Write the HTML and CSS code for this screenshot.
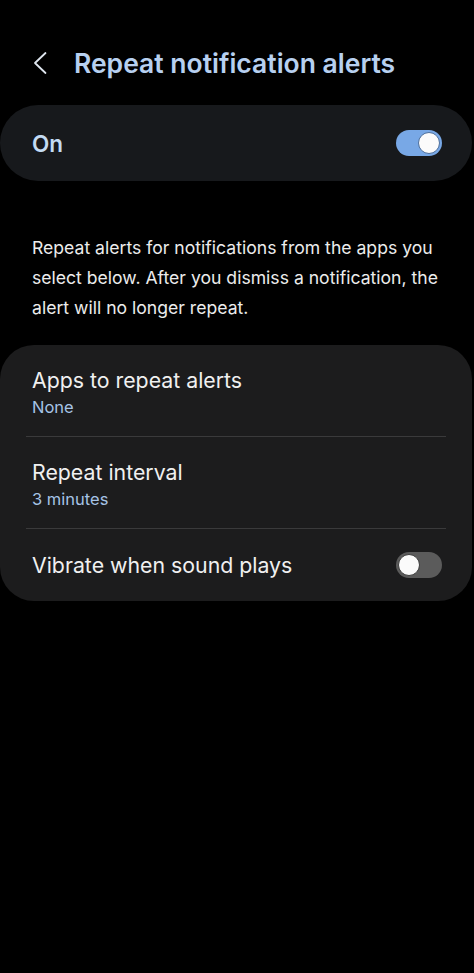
FILE: index.html
```html
<!DOCTYPE html>
<html>
<head>
    <title>Repeat notification alerts</title>
    <link rel="stylesheet" href="styles.css">
</head>
<body>
    <div class="screen">
        <div class="header">
            <svg class="back" width="14" height="26" viewBox="0 0 14 26">
                <path d="M12.5 3 L2 13 L12.5 23" fill="none" stroke="#dfe6ef" stroke-width="1.8" stroke-linecap="round" stroke-linejoin="round"/>
            </svg>
            <h1 class="title">Repeat notification alerts</h1>
        </div>

        <div class="master">
            <span class="master_label">On</span>
            <span class="switch switch_on"><span class="knob"></span></span>
        </div>

        <p class="desc">Repeat alerts for notifications from the apps you select below. After you dismiss a notification, the alert will no longer repeat.</p>

        <div class="card">
            <div class="row">
                <div class="row_title">Apps to repeat alerts</div>
                <div class="row_sub">None</div>
            </div>
            <div class="divider"></div>
            <div class="row">
                <div class="row_title">Repeat interval</div>
                <div class="row_sub">3 minutes</div>
            </div>
            <div class="divider"></div>
            <div class="row row_switch">
                <div class="row_title">Vibrate when sound plays</div>
                <span class="switch switch_off"><span class="knob"></span></span>
            </div>
        </div>
    </div>
</body>
</html>
```

FILE: styles.css
```css
body {
	margin: 0;
	background-color: #000000;
	font-family: Inter, "Noto Sans", sans-serif;
	color: #ececec;
}

.screen {
	width: 474px;
	height: 973px;
	display: flex;
	flex-direction: column;
}

.header {
	display: flex;
	align-items: center;
	height: 52px;
	margin-top: 37px;
	padding-left: 33px;
}

.back {
	margin-right: 27px;
}

.title {
	margin: 0;
	font-size: 26.5px;
	font-weight: 600;
	color: #b7d0f0;
}

.master {
	display: flex;
	align-items: center;
	justify-content: space-between;
	height: 76px;
	margin: 16px 2px 0 0;
	padding: 0 32px;
	background-color: #17191c;
	border-radius: 38px;
}

.master_label {
	font-size: 22.5px;
	font-weight: 600;
	color: #c3dbf3;
}

.switch {
	position: relative;
	width: 46px;
	height: 26px;
	border-radius: 13px;
	margin-right: -2px;
}

.switch_on {
	background-color: #78a8e6;
}

.switch_off {
	background-color: #5b5b5b;
}

.knob {
	position: absolute;
	top: 2px;
	width: 20px;
	height: 20px;
	border-radius: 50%;
	background-color: #fbfbfb;
}

.switch_on .knob {
	right: 2px;
	border: 1px solid #4d6f9c;
}

.switch_off .knob {
	left: 2px;
	border: 1px solid #3e3e3e;
}

.desc {
	margin: 52px 32px 0 32px;
	font-size: 17.6px;
	line-height: 30px;
	color: #ececec;
}

.card {
	margin: 22px 2px 0 0;
	background-color: #1c1c1d;
	border-radius: 34px;
}

.row {
	padding: 21px 32px 18px 32px;
}

.row_title {
	font-size: 21.3px;
	line-height: 28px;
	color: #f0f0f0;
}

.row_sub {
	margin-top: 2px;
	font-size: 16.5px;
	line-height: 22px;
	color: #a6c3e6;
}

.row_switch {
	display: flex;
	align-items: center;
	justify-content: space-between;
	padding-top: 22px;
	padding-bottom: 22px;
}

.divider {
	height: 1px;
	margin: 0 26px;
	background-color: #3a3a3b;
}
```
